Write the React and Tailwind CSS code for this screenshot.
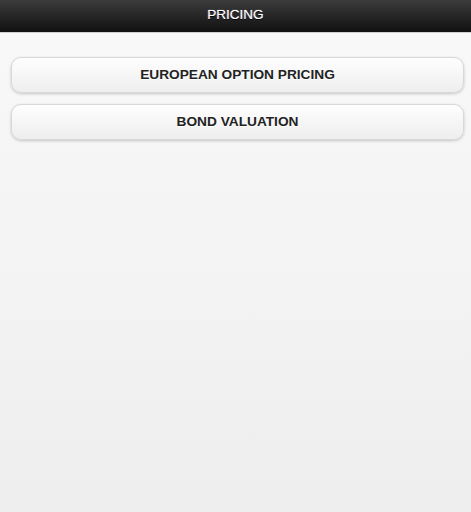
import React from "react";

export default function App() {
  return (
    <div className="min-h-[512px] w-full flex flex-col bg-gradient-to-b from-[#f9f9f9] to-[#eeeeee] font-['Liberation_Sans',Arial,sans-serif]">
      <div className="h-[33px] bg-gradient-to-b from-[#3c3c3c] to-[#111111] border-b border-[#cfcfcf] flex items-center justify-center">
        <h1 className="text-[13.5px] font-normal text-white leading-none -mt-[3px] [text-shadow:0_1px_0_#000,0_0_1px_#fff]">PRICING</h1>
      </div>
      <div className="flex flex-col gap-[11px] pl-[11px] pr-[7px] pt-[24px]">
        {["EUROPEAN OPTION PRICING", "BOND VALUATION"].map((t) => (
          <button
            key={t}
            className="h-[36px] w-full rounded-[10px] border border-[#d8d8d8] bg-gradient-to-b from-[#fefefe] to-[#eeeeee] shadow-[0_1px_3px_rgba(0,0,0,0.2)] text-[13.7px] font-bold text-[#222222] [text-shadow:0_1px_0_#ffffff] flex items-center justify-center"
          >
            {t}
          </button>
        ))}
      </div>
    </div>
  );
}
